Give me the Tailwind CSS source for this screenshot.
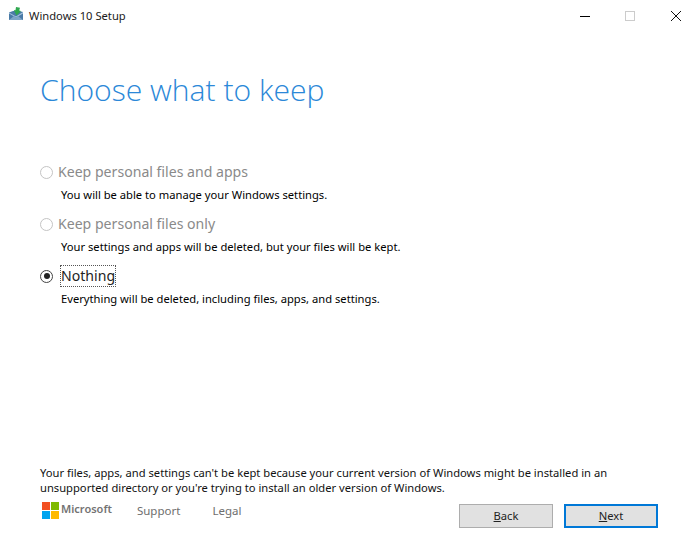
<!DOCTYPE html>
<html lang="en">
<head>
  <meta charset="UTF-8" />
  <meta name="viewport" content="width=device-width, initial-scale=1.0" />
  <title>Windows 10 Setup</title>
  <script src="https://cdn.jsdelivr.net/npm/@tailwindcss/browser@4"></script>
</head>
<body class="bg-white overflow-hidden font-['Noto_Sans','Open_Sans',sans-serif] text-black">
  <div class="w-[690px] h-[540px] flex flex-col">

    <!-- title bar -->
    <div class="h-[32px] flex items-center justify-between shrink-0">
      <div class="flex items-center pl-[9px] gap-[6px]">
        <svg width="14" height="14" viewBox="0 0 14 14" class="-mt-[4px]">
          <path d="M0 5.5 L4 4 H10 L14 5 V13 H0 Z" fill="#4a7ba7" />
          <path d="M0 5.5 L7 9.5 L14 5 V6.5 L7 10.5 L0 6.5 Z" fill="#a9c6de" />
          <path d="M0 13 L5 9 L7 10.5 L9 9 L14 13 Z" fill="#7fa6c8" />
          <path d="M7 0 L11 0.8 L10.2 3.5 L12 4 L7.5 8.5 L4.8 3 L6.5 3.2 Z" fill="#2fa84f" />
        </svg>
        <span class="text-[11.2px] text-[#1a1a1a]">Windows 10 Setup</span>
      </div>
      <div class="flex items-center gap-[35px] pr-[9px]">
        <div class="w-[10px] h-px bg-black"></div>
        <div class="w-[10px] h-[10px] border border-[#cccccc]"></div>
        <svg width="10" height="10" viewBox="0 0 10 10" class="ml-px"><path d="M0 0 L10 10 M10 0 L0 10" stroke="#111" stroke-width="1" fill="none" /></svg>
      </div>
    </div>

    <!-- content -->
    <div class="flex-1 flex flex-col pl-[40px]">
      <h1 class="mt-[33px] text-[30.1px] leading-[50px] font-light text-[#2b88d8] font-['Open_Sans',sans-serif]">Choose what to keep</h1>

      <div class="mt-[45px] flex flex-col gap-[10px]">
        <div>
          <label class="flex items-center gap-[5px] h-[24px]">
            <span class="w-[13px] h-[13px] rounded-full border border-[#c4c4c4]"></span>
            <span class="text-[14.1px] text-[#8a8a8a]">Keep personal files and apps</span>
          </label>
          <p class="ml-[21px] mt-[3px] text-[11.2px] leading-[15px]">You will be able to manage your Windows settings.</p>
        </div>
        <div>
          <label class="flex items-center gap-[5px] h-[24px]">
            <span class="w-[13px] h-[13px] rounded-full border border-[#c4c4c4]"></span>
            <span class="text-[14.1px] text-[#8a8a8a]">Keep personal files only</span>
          </label>
          <p class="ml-[21px] mt-[3px] text-[11.2px] leading-[15px]">Your settings and apps will be deleted, but your files will be kept.</p>
        </div>
        <div>
          <label class="flex items-center gap-[8px] h-[24px]">
            <span class="w-[13px] h-[13px] rounded-full border-[1.5px] border-[#444444] flex items-center justify-center">
              <span class="w-[6px] h-[6px] rounded-full bg-[#222222]"></span>
            </span>
            <span class="text-[14.1px] leading-[20px] text-[#222222] outline-1 outline-dotted outline-[#555555]">Nothing</span>
          </label>
          <p class="ml-[21px] mt-[3px] text-[11.2px] leading-[15px]">Everything will be deleted, including files, apps, and settings.</p>
        </div>
      </div>

      <!-- footer -->
      <div class="mt-auto">
        <p class="text-[11.2px] leading-[15px] w-[600px] text-[#111111]">Your files, apps, and settings can't be kept because your current version of Windows might be installed in an unsupported directory or you're trying to install an older version of Windows.</p>
        <div class="h-[45px] flex items-start justify-between pr-[32px]">
          <div class="flex items-center mt-[7px] ml-[2px]">
            <div class="grid grid-cols-2 gap-px w-[17px] h-[17px]">
              <div class="bg-[#f25022]"></div>
              <div class="bg-[#7fba00]"></div>
              <div class="bg-[#00a4ef]"></div>
              <div class="bg-[#ffb900]"></div>
            </div>
            <span class="ml-[2px] text-[11px] font-semibold text-[#737373] -mt-[2px]">Microsoft</span>
            <a class="ml-[25px] text-[11.5px] text-[#6e6e6e]">Support</a>
            <a class="ml-[32px] text-[11.5px] text-[#6e6e6e]">Legal</a>
          </div>
          <div class="flex gap-[11px] mt-[9px]">
            <button class="w-[94px] h-[24px] bg-[#e1e1e1] border border-[#adadad] text-[11.2px] text-[#222222]"><u>B</u>ack</button>
            <button class="w-[94px] h-[24px] bg-[#e1e1e1] border-2 border-[#0078d7] text-[11.2px] text-[#222222]"><u>N</u>ext</button>
          </div>
        </div>
      </div>
    </div>
  </div>
</body>
</html>
